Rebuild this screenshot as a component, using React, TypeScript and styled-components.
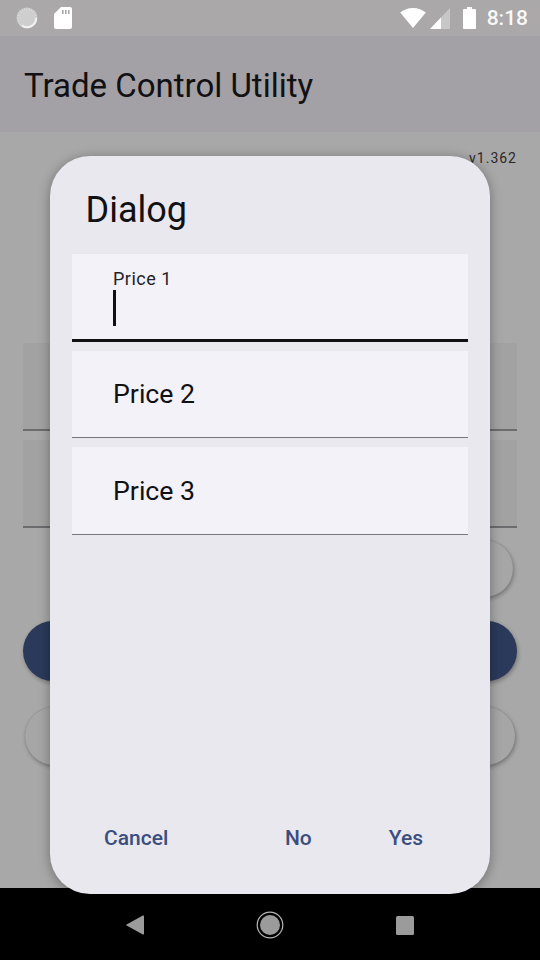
import React from "react";
import styled, { createGlobalStyle } from "styled-components";

const GlobalStyle = createGlobalStyle`
  html, body {
    margin: 0;
    padding: 0;
    background: #a9a8a8;
  }
  body {
    font-family: Roboto, "Liberation Sans", sans-serif;
  }
`;

const spinnerTicks = Array.from({ length: 24 }, (_, i) => i * 15);

function SpinnerIcon() {
  return (
    <svg width="22" height="22" viewBox="0 0 22 22">
      <circle cx="11" cy="11" r="10.5" fill="#c9c8c8" />
      {spinnerTicks.map((deg) => (
        <rect key={deg} x="10.6" y="1" width="0.8" height="3" fill="#e2e1e1" transform={`rotate(${deg} 11 11)`} />
      ))}
      <circle cx="11" cy="11" r="7.6" fill="#cfcece" />
      <path d="M20.2 11a9.2 9.2 0 0 1-14.4 7.6" fill="none" stroke="#f4f4f4" strokeWidth="1.8" />
    </svg>
  );
}

function SdCardIcon() {
  return (
    <svg width="18" height="22" viewBox="0 0 18 22">
      <path
        d="M7 0h9a2 2 0 0 1 2 2v18a2 2 0 0 1-2 2H2a2 2 0 0 1-2-2V7z"
        fill="#fff"
      />
      <path d="M8 3h1.6v4H8zM11 3h1.6v4H11zM14 3h1.6v4H14z" fill="#aaa8a9" />
    </svg>
  );
}

function WifiIcon() {
  return (
    <svg width="26" height="20" viewBox="0 0 26 20">
      <path d="M13 20 0.2 4.6C3.6 1.8 8 0 13 0s9.4 1.8 12.8 4.6z" fill="#fff" />
    </svg>
  );
}

function SignalIcon() {
  return (
    <svg width="20" height="21" viewBox="0 0 20 21">
      <path d="M20 0v21H0z" fill="#c8c7c7" />
      <path d="M11 9.5V21H0z" fill="#fff" />
    </svg>
  );
}

function BatteryIcon() {
  return (
    <svg width="13" height="22" viewBox="0 0 13 22">
      <path
        d="M4 0h5v2h3a1 1 0 0 1 1 1v18a1 1 0 0 1-1 1H1a1 1 0 0 1-1-1V3a1 1 0 0 1 1-1h3z"
        fill="#fff"
      />
    </svg>
  );
}

function BackIcon() {
  return (
    <svg width="18" height="20" viewBox="0 0 18 20">
      <path d="M17 0.5c.6 0 1 .4 1 1v17c0 .6-.4 1-1 1-.2 0-.4 0-.6-.2L.6 10.6c-.6-.4-.6-.9 0-1.2L16.4.7c.2-.1.4-.2.6-.2z" fill="#9b9b9b" />
    </svg>
  );
}

function HomeIcon() {
  return (
    <svg width="28" height="28" viewBox="0 0 28 28">
      <circle cx="14" cy="14" r="12.8" fill="none" stroke="#b5b5b5" strokeWidth="1.2" />
      <circle cx="14" cy="14" r="10" fill="#9b9b9b" />
    </svg>
  );
}

function RecentsIcon() {
  return (
    <svg width="18" height="19" viewBox="0 0 18 19">
      <rect width="18" height="19" rx="1.5" fill="#9b9b9b" />
    </svg>
  );
}

export default function App() {
  return (
    <Screen>
      <GlobalStyle />
      <StatusBar>
        <StatusGroup>
          <SpinnerIcon />
          <SdCardIcon />
        </StatusGroup>
        <StatusRight>
          <WifiIcon />
          <SignalWrap>
            <SignalIcon />
          </SignalWrap>
          <BatteryWrap>
            <BatteryIcon />
          </BatteryWrap>
          <Clock>8:18</Clock>
        </StatusRight>
      </StatusBar>

      <AppBar>
        <AppTitle>Trade Control Utility</AppTitle>
      </AppBar>

      <Body>
        <Version>v1.362</Version>
        <BackField />
        <BackField />
        <RoundRow>
          <RoundButton />
        </RoundRow>
        <PrimaryPill />
        <OutlinePill />
      </Body>

      <NavBar>
        <BackIcon />
        <HomeIcon />
        <RecentsIcon />
      </NavBar>

      <Dialog>
        <DialogTitle>Dialog</DialogTitle>
        <Fields>
          <Field $active>
            <FloatLabel>Price 1</FloatLabel>
            <Caret />
          </Field>
          <Field>
            <FieldLabel>Price 2</FieldLabel>
          </Field>
          <Field>
            <FieldLabel>Price 3</FieldLabel>
          </Field>
        </Fields>
        <Actions>
          <ActionButton>Cancel</ActionButton>
          <RightActions>
            <ActionButton>No</ActionButton>
            <ActionButton>Yes</ActionButton>
          </RightActions>
        </Actions>
      </Dialog>
    </Screen>
  );
}

const Screen = styled.div`
  position: relative;
  display: flex;
  flex-direction: column;
  width: 540px;
  height: 960px;
  overflow: hidden;
  background: #a9a8a8;
`;

const StatusBar = styled.div`
  display: flex;
  justify-content: space-between;
  align-items: center;
  box-sizing: border-box;
  height: 36px;
  padding: 0 12px 0 16px;
  background: #aaa8a9;
`;

const StatusGroup = styled.div`
  display: flex;
  align-items: center;
  gap: 16px;
`;

const StatusRight = styled.div`
  display: flex;
  align-items: center;
`;

const SignalWrap = styled.div`
  display: flex;
  margin-left: 4px;
`;

const BatteryWrap = styled.div`
  display: flex;
  margin-left: 13px;
`;

const Clock = styled.span`
  margin-left: 11px;
  color: #fff;
  font-size: 21px;
  font-weight: 500;
  line-height: 24px;
  opacity: 0.92;
`;

const AppBar = styled.div`
  display: flex;
  align-items: center;
  box-sizing: border-box;
  height: 96px;
  padding: 4px 24px 0;
  background: #a3a1a6;
`;

const AppTitle = styled.div`
  color: #111013;
  font-size: 33px;
  line-height: 40px;
`;

const Body = styled.div`
  display: flex;
  flex: 1;
  flex-direction: column;
  padding: 0 23px;
`;

const Version = styled.div`
  align-self: flex-end;
  margin-top: 17px;
  color: #2a292b;
  font-size: 14px;
  line-height: 18px;
  letter-spacing: 1px;
`;

const BackField = styled.div`
  box-sizing: border-box;
  height: 88px;
  margin-bottom: 9px;
  background: #a3a2a3;
  border-bottom: 2px solid #6c6b6d;

  ${Version} + & {
    margin-top: 176px;
  }
`;

const RoundRow = styled.div`
  display: flex;
  justify-content: flex-end;
  margin: 3px 4px 0 0;
`;

const RoundButton = styled.div`
  box-sizing: border-box;
  width: 57px;
  height: 57px;
  background: #a7a6a6;
  border-radius: 50%;
  box-shadow: 0 0 1px #7d7c7d, 1px 2px 4px rgba(0, 0, 0, 0.3);
`;

const PrimaryPill = styled.div`
  height: 60px;
  margin-top: 24px;
  background: #2b3a5b;
  border-radius: 30px;
  box-shadow: 1px 2px 4px rgba(0, 0, 0, 0.3);
`;

const OutlinePill = styled.div`
  box-sizing: border-box;
  height: 58px;
  margin: 26px 2px 0;
  background: #a7a6a6;
  border-radius: 29px;
  box-shadow: 0 0 1px #7d7c7d, 1px 2px 4px rgba(0, 0, 0, 0.3);
`;

const NavBar = styled.div`
  display: flex;
  justify-content: center;
  align-items: center;
  gap: 112px;
  box-sizing: border-box;
  height: 72px;
  padding-top: 2px;
  background: #000;
`;

const Dialog = styled.div`
  position: absolute;
  top: 156px;
  left: 50px;
  display: flex;
  flex-direction: column;
  box-sizing: border-box;
  width: 440px;
  height: 738px;
  padding: 0 22px;
  background: #e9e8ee;
  border-radius: 40px;
  box-shadow: 0 2px 12px rgba(0, 0, 0, 0.35);
`;

const DialogTitle = styled.div`
  margin: 32px 0 21px 14px;
  color: #111013;
  font-size: 36px;
  line-height: 45px;
  transform: translateX(-0.5px);
`;

const Fields = styled.div`
  display: flex;
  flex-direction: column;
  gap: 9px;
`;

const Field = styled.div<{ $active?: boolean }>`
  display: flex;
  flex-direction: column;
  justify-content: center;
  box-sizing: border-box;
  height: 87.5px;
  padding-left: 41px;
  background: #f3f2f8;
  border-bottom: ${(p) => (p.$active ? "3px solid #111013" : "1.5px solid #77767b")};
`;

const FieldLabel = styled.span`
  margin-top: 1px;
  color: #111013;
  font-size: 26.7px;
  line-height: 32px;
`;

const FloatLabel = styled.span`
  margin-top: 3px;
  color: #232226;
  font-size: 18px;
  line-height: 22px;
  letter-spacing: 0.5px;
`;

const Caret = styled.div`
  width: 3px;
  height: 36px;
  margin-top: 0;
  margin-bottom: 2px;
  background: #111013;
`;

const Actions = styled.div`
  display: flex;
  justify-content: space-between;
  align-items: center;
  margin-top: auto;
  padding: 0 45px 42px 32px;
`;

const RightActions = styled.div`
  display: flex;
  gap: 77px;
`;

const ActionButton = styled.span`
  color: #3b4f7f;
  font-size: 21px;
  font-weight: 500;
  line-height: 28px;
`;
